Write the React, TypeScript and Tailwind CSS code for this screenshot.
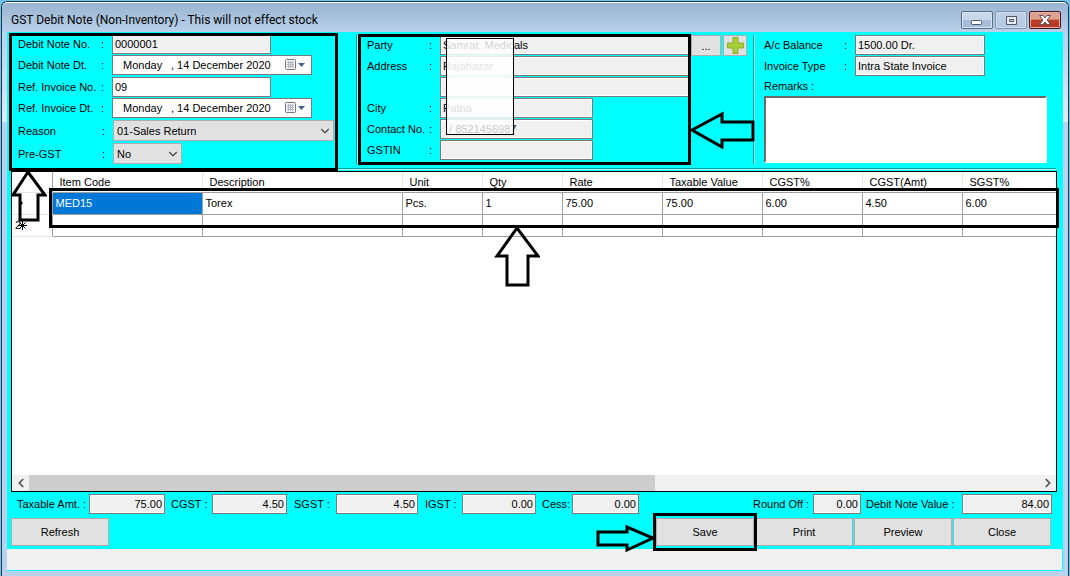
import type { ReactNode } from "react";
import { ChevronDown, ChevronLeft, ChevronRight } from "lucide-react";

const columns = [
  { name: "Item Code", value: "MED15" },
  { name: "Description", value: "Torex" },
  { name: "Unit", value: "Pcs." },
  { name: "Qty", value: "1" },
  { name: "Rate", value: "75.00" },
  { name: "Taxable Value", value: "75.00" },
  { name: "CGST%", value: "6.00" },
  { name: "CGST(Amt)", value: "4.50" },
  { name: "SGST%", value: "6.00" },
];

const fieldBox =
  "block h-5 min-w-0 border border-[#7a7a7a] px-0.5 outline-none shadow-[inset_0_0_0_1px_#fff]";

function Label({ htmlFor, children, width }: { htmlFor: string; children: ReactNode; width: string }) {
  return (
    <label htmlFor={htmlFor} className={`flex shrink-0 items-center justify-between whitespace-pre pr-2 ${width}`}>
      <span>{children}</span>
      <span>:</span>
    </label>
  );
}

function DateField({ id, label }: { id: string; label: string }) {
  return (
    <div className="flex h-5">
      <Label htmlFor={id} width="w-[94px]">{label}</Label>
      <button
        id={id}
        type="button"
        className="flex h-5 w-[200px] items-center border border-[#7a7a7a] bg-white pl-2.5 pr-1.5"
      >
        <span className="w-12 text-left">Monday</span>
        <span className="grow text-left">, 14 December 2020</span>
        <svg width="20" height="12" viewBox="0 0 20 12">
          <rect x="0.5" y="0.5" width="10" height="10" rx="1" fill="#f4f6fa" stroke="#77787f" />
          <path d="M2 3.5h7M2 5.5h7M2 7.5h7M3.5 2v7M5.5 2v7M7.5 2v7" stroke="#b3b7c4" strokeWidth="1" />
          <path d="M13 4h7l-3.500 4z" fill="#45608c" />
        </svg>
      </button>
    </div>
  );
}

function TextField({ id, label, value, box }: { id: string; label: string; value: string; box: string }) {
  return (
    <div className="flex h-5">
      <Label htmlFor={id} width="w-[94px]">{label}</Label>
      <input id={id} defaultValue={value} className={`${fieldBox} ${box}`} />
    </div>
  );
}

function PickField({ id, label, value, box }: { id: string; label: string; value: string; box: string }) {
  return (
    <div className="flex h-[21px]">
      <Label htmlFor={id} width="w-[95px]">{label}</Label>
      <div className={`relative ${box}`}>
        <select id={id} className="h-[21px] w-full appearance-none border border-[#adadad] bg-[#e1e1e1] px-[3px]">
          <option>{value}</option>
        </select>
        <ChevronDown size={14} strokeWidth={2} className="absolute right-0.5 top-1 text-[#444]" />
      </div>
    </div>
  );
}

function PartyField({ id, label, value, box }: { id: string; label: string; value: string; box: string }) {
  return (
    <div className="flex h-5">
      <Label htmlFor={id} width="w-[73px]">{label}</Label>
      <input id={id} defaultValue={value} readOnly className={`${fieldBox} bg-[#f0f0f0] ${box}`} />
    </div>
  );
}

function Total({ id, label, value, width, box }: { id: string; label: string; value: string; width: string; box: string }) {
  return (
    <div className="flex h-5 items-center">
      <label htmlFor={id} className={`shrink-0 whitespace-nowrap ${width}`}>{label}</label>
      <input id={id} defaultValue={value} readOnly className={`${fieldBox} bg-[#f0f0f0] text-right ${box}`} />
    </div>
  );
}

function ActionButton({ children }: { children: ReactNode }) {
  return (
    <button type="button" className="h-7 w-[98px] border border-[#adadad] bg-[#e1e1e1]">
      {children}
    </button>
  );
}

function Groove() {
  return <div className="h-[129px] w-0.5 shrink-0 border-l border-r border-l-[#00a0a0] border-r-[#a0ffff]" />;
}

function TitleBar() {
  return (
    <header className="flex h-[29px] items-start justify-between bg-linear-to-b from-[#99b4d1] to-[#b9d1ea] pl-[9px] pr-[7px]">
      <h1 className="pt-2 font-['Roboto',sans-serif] text-[12px] leading-[18px]">
        GST Debit Note (Non-Inventory) - This will not effect stock
      </h1>
      <div className="flex gap-0.5 pt-2">
        <button type="button" aria-label="Minimize" className="flex h-[18px] w-8 items-center justify-center rounded-[2px] border border-[#5b6b80] bg-linear-to-b from-[#c7d8ea] from-50% to-[#a5bdd8] to-50% shadow-[inset_0_0_0_1px_#dce8f5]">
          <svg width="12" height="12"><rect x="0.5" y="6.500" width="10" height="4" rx="1" fill="#fff" stroke="#535666" /></svg>
        </button>
        <button type="button" aria-label="Maximize" className="flex h-[18px] w-8 items-center justify-center rounded-[2px] border border-[#8294ab] bg-linear-to-b from-[#bed1e7] to-[#b3cae3] shadow-[inset_0_0_0_1px_#cfdeee]">
          <svg width="11" height="9"><path d="M.5.5h10v8H.5z M3.500 3.500h4v2h-4z" fill="#e8edf3" fillRule="evenodd" stroke="#535666" /></svg>
        </button>
        <button type="button" aria-label="Close window" className="flex h-[18px] w-8 items-center justify-center rounded-[2px] border border-[#431422] bg-linear-to-b from-[#e0a08f] from-45% to-[#bb3a26] to-50% shadow-[inset_0_0_0_1px_#e8b0a3]">
          <svg width="12" height="10"><path d="M.5.5h3.500L6 3l2-2.500h3.500L8 5l3.500 4.500H8L6 7 4 9.500H.5L4 5z" fill="#fff" stroke="#535666" /></svg>
        </button>
      </div>
    </header>
  );
}

function NotePanel() {
  return (
    <section className="relative flex h-[138px] w-[329px] shrink-0 flex-col gap-0.5 pl-[9px] pt-px">
      <div className="flex flex-col gap-px">
        <TextField id="note-no" label="Debit Note No." value="0000001" box="w-[159px] bg-[#f0f0f0]" />
        <DateField id="note-dt" label="Debit Note Dt." />
      </div>
      <div className="flex flex-col gap-px">
        <TextField id="ref-no" label="Ref. Invoice No." value="09" box="w-[159px] bg-white" />
        <DateField id="ref-dt" label="Ref. Invoice Dt." />
      </div>
      <PickField id="reason" label="Reason" value="01-Sales Return" box="w-[221px]" />
      <PickField id="pre-gst" label="Pre-GST" value="No" box="w-[69px]" />
      <div className="pointer-events-none absolute inset-0 border-3 border-black" />
      <svg className="absolute left-0.5 top-[137px] z-20" width="36" height="54" fill="none" stroke="#000" strokeWidth="3">
        <path d="M17 2L2 25h7v25h18V25h7z" />
      </svg>
    </section>
  );
}

function PartyPanel() {
  return (
    <section className="relative mt-px h-[131px] w-[333px] shrink-0 pl-[9px] pt-px">
      <div className="flex flex-col gap-px">
        <PartyField id="party" label="Party" value="Samrat  Medicals" box="grow" />
        <PartyField id="address" label="Address" value="Rajabazar" box="grow" />
        <div className="flex h-5 pl-[73px]">
          <input aria-label="Address line 2" readOnly className={`${fieldBox} grow bg-[#f0f0f0]`} />
        </div>
        <PartyField id="city" label="City" value="Patna" box="w-[153px]" />
        <PartyField id="contact" label="Contact No." value="  / 8521456987" box="w-[153px]" />
        <PartyField id="gstin" label="GSTIN" value="" box="w-[153px]" />
      </div>
      <div className="absolute left-[88px] top-1 h-[97px] w-[68px] border border-black bg-linear-to-b from-white/80 via-white/95 to-white/75" />
      <div className="pointer-events-none absolute inset-0 border-3 border-black" />
      <svg className="absolute left-full top-[77px] z-20" width="64" height="38" fill="none" stroke="#000" strokeWidth="3">
        <path d="M1 19L31 3v8h31v18H31v7z" />
      </svg>
    </section>
  );
}

function BalancePanel() {
  return (
    <section className="mt-0.5 min-w-0 grow pl-[9px] pr-4">
      <div className="flex flex-col gap-px">
        <div className="flex h-5">
          <Label htmlFor="balance" width="w-[91px]">A/c Balance</Label>
          <input id="balance" defaultValue="1500.00 Dr." readOnly className={`${fieldBox} w-[130px] bg-[#f0f0f0]`} />
        </div>
        <div className="flex h-5">
          <Label htmlFor="inv-type" width="w-[91px]">Invoice Type</Label>
          <input id="inv-type" defaultValue="Intra State Invoice" readOnly className={`${fieldBox} w-[130px] bg-[#f0f0f0]`} />
        </div>
      </div>
      <label htmlFor="remarks" className="block h-5 leading-5">Remarks :</label>
      <textarea
        id="remarks"
        className="block h-[67px] w-full resize-none border-2 border-b-white border-l-[#696969] border-r-white border-t-[#696969] bg-white px-1 outline-none"
      />
    </section>
  );
}

function ItemGrid() {
  return (
    <section className="relative flex min-h-80 grow flex-col border border-black bg-white">
      <table className="w-full table-fixed border-collapse text-left">
        <colgroup>
          <col className="w-10" />
          <col className="w-[150px]" />
          <col className="w-[200px]" />
          <col className="w-20" />
          <col className="w-20" />
          <col className="w-[100px]" />
          <col className="w-[100px]" />
          <col className="w-[100px]" />
          <col className="w-[100px]" />
          <col />
        </colgroup>
        <thead>
          <tr className="h-5">
            <th className="border-r border-b border-r-[#a0a0a0] border-b-[#e5e5e5]" />
            {columns.map((c) => (
              <th key={c.name} className="border-r border-b border-r-[#e5e5e5] border-b-[#a0a0a0] pl-[7px] font-normal last:border-r-0">
                {c.name}
              </th>
            ))}
          </tr>
        </thead>
        <tbody>
          <tr className="h-[22px]">
            <th className="border-r border-b border-r-[#a0a0a0] border-b-[#e5e5e5] pl-[5px] font-normal">
              <svg width="8" height="8"><path d="M2 0l4 4-4 4z" /></svg>
            </th>
            {columns.map((c) => (
              <td
                key={c.name}
                className="border-r border-b border-[#a0a0a0] pl-[3px] first-of-type:bg-[#0078d7] first-of-type:text-white last:border-r-0"
              >
                {c.value}
              </td>
            ))}
          </tr>
          <tr className="h-[22px]">
            <th className="border-r border-b border-r-[#a0a0a0] border-b-[#e5e5e5] pl-[3px] font-normal">
              <div className="flex items-center">
                2
                <svg className="-ml-1" width="11" height="11" stroke="#000"><path d="M5.500 1v9M1 5.500h9M2.500 2.500l6 6M8.500 2.500l-6 6" /></svg>
              </div>
            </th>
            {columns.map((c) => (
              <td key={c.name} className="border-r border-b border-[#a0a0a0] last:border-r-0" />
            ))}
          </tr>
        </tbody>
      </table>
      <div className="mt-auto flex h-4 items-center justify-between bg-[#f0f0f0]">
        <button type="button" aria-label="Scroll left" className="flex w-[17px] justify-center">
          <ChevronLeft size={14} strokeWidth={3} className="text-[#505050]" />
        </button>
        <div className="h-full grow"><div className="h-full w-[62%] bg-[#cdcdcd]" /></div>
        <button type="button" aria-label="Scroll right" className="flex w-[17px] justify-center">
          <ChevronRight size={14} strokeWidth={3} className="text-[#505050]" />
        </button>
      </div>
      <div className="pointer-events-none absolute -right-[3px] left-[37px] top-4 h-10 border-3 border-black" />
      <svg className="absolute left-[482px] top-[53px]" width="46" height="62" fill="none" stroke="#000" strokeWidth="3">
        <path d="M23 3L3 31h10v29h21V31h10z" />
      </svg>
    </section>
  );
}

export default function App() {
  return (
    <main className="flex min-h-screen flex-col bg-[#6cc5ee] pt-px font-['Liberation_Sans',sans-serif] text-[11px] leading-4 text-black">
      <div className="mx-px flex grow flex-col rounded-t-md border border-b-0 border-[#26384c] bg-[#b9d1ea]">
        <div className="flex grow flex-col overflow-hidden rounded-t-md border-t border-white bg-[linear-gradient(#b9d1ea_30px,#e1ebf6_119px,#b9d1ea_119px)]">
          <TitleBar />
          <div className="mx-[5px] mb-[5px] flex grow flex-col bg-[#00ffff]">
            <div className="flex pl-0.5 pt-px">
              <NotePanel />
              <div className="shrink-0 pl-[18px] pt-0.5"><Groove /></div>
              <PartyPanel />
              <div className="flex w-[62px] shrink-0 items-start gap-0.5 pt-0.5">
                <button type="button" className="h-[21px] w-[30px] border border-[#adadad] bg-[#e1e1e1]">...</button>
                <button type="button" aria-label="Add party" className="flex h-[21px] w-6 items-center justify-center border border-[#adadad] bg-[#e1e1e1]">
                  <svg width="17" height="17"><path d="M6 .5h5V6h5.500v5H11v5.500H6V11H.5V6H6z" fill="#a5ce39" stroke="#8ab02b" /></svg>
                </button>
              </div>
              <div className="pt-0.5"><Groove /></div>
              <BalancePanel />
            </div>
            <div className="relative flex grow flex-col pl-1 pr-1.5">
              <div className="absolute -top-[3px] left-[331px] right-[7px] h-0.5 border-b border-t border-b-[#a0ffff] border-t-[#00a0a0]" />
              <ItemGrid />
              <div className="flex items-center pr-[5px] pt-0.5">
                <div className="flex grow items-center pl-1.5">
                  <Total id="taxable" label="Taxable Amt. :" value="75.00" width="w-[72px]" box="w-[76px]" />
                  <Total id="cgst" label="CGST :" value="4.50" width="w-[47px] pl-1.5" box="w-[75px]" />
                  <Total id="sgst" label="SGST :" value="4.50" width="w-[49px] pl-[7px]" box="w-[82px]" />
                  <Total id="igst" label="IGST :" value="0.00" width="w-[44px] pl-[7px]" box="w-[74px]" />
                  <Total id="cess" label="Cess:" value="0.00" width="w-9 pl-1.5" box="w-[67px]" />
                </div>
                <Total id="round-off" label="Round Off :" value="0.00" width="w-[60px]" box="w-12" />
                <Total id="note-value" label="Debit Note Value :" value="84.00" width="w-[101px] pl-[5px]" box="w-[90px]" />
              </div>
              <div className="flex gap-px pb-[3px] pr-1.5 pt-1">
                <ActionButton>Refresh</ActionButton>
                <div className="relative ml-auto">
                  <ActionButton>Save</ActionButton>
                  <div className="pointer-events-none absolute -inset-x-[3px] -bottom-[5px] -top-[5px] border-3 border-black" />
                  <svg className="absolute right-full top-1.5" width="60" height="29" fill="none" stroke="#000" strokeWidth="3">
                    <path d="M2 8h29V3l26 11-26 12v-5H2z" />
                  </svg>
                </div>
                <ActionButton>Print</ActionButton>
                <ActionButton>Preview</ActionButton>
                <ActionButton>Close</ActionButton>
              </div>
            </div>
            <footer className="mb-px mr-px h-[21px] bg-[#f0f0f0]" />
          </div>
        </div>
      </div>
    </main>
  );
}
